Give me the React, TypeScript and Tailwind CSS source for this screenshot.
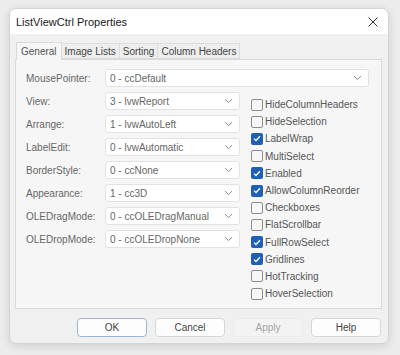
const font = { fontFamily: '"Liberation Sans", Arial, sans-serif' };

const combos = [
  { label: 'View:', value: '3 - lvwReport' },
  { label: 'Arrange:', value: '1 - lvwAutoLeft' },
  { label: 'LabelEdit:', value: '0 - lvwAutomatic' },
  { label: 'BorderStyle:', value: '0 - ccNone' },
  { label: 'Appearance:', value: '1 - cc3D' },
  { label: 'OLEDragMode:', value: '0 - ccOLEDragManual' },
  { label: 'OLEDropMode:', value: '0 - ccOLEDropNone' },
];

const checks: [string, boolean][] = [
  ['HideColumnHeaders', false],
  ['HideSelection', false],
  ['LabelWrap', true],
  ['MultiSelect', false],
  ['Enabled', true],
  ['AllowColumnReorder', true],
  ['Checkboxes', false],
  ['FlatScrollbar', false],
  ['FullRowSelect', true],
  ['Gridlines', true],
  ['HotTracking', false],
  ['HoverSelection', false],
];

function Chevron() {
  return (
    <svg width="9" height="6" viewBox="0 0 9 6" className="shrink-0">
      <path d="M1 1.2 L4.5 4.6 L8 1.2" fill="none" stroke="#8a8a8a" strokeWidth="1" />
    </svg>
  );
}

function Combo({ value, wide }: { value: string; wide?: boolean }) {
  return (
    <div
      className={`${wide ? 'w-[264px]' : 'w-[135px]'} h-[18px] bg-white border border-[#e2e2e2] rounded-[3px] flex items-center justify-between pl-[4px] pr-[6px]`}
    >
      <span className="text-[10px] text-[#666]">{value}</span>
      <Chevron />
    </div>
  );
}

function Check({ label, checked }: { label: string; checked: boolean }) {
  return (
    <div className="h-[17.2px] flex items-center">
      {checked ? (
        <div className="w-[12px] h-[12px] rounded-[2px] bg-[#1e5fb8] flex items-center justify-center">
          <svg width="8" height="7" viewBox="0 0 8 7">
            <path d="M1 3.6 L3 5.5 L7 1.3" fill="none" stroke="white" strokeWidth="1.3" />
          </svg>
        </div>
      ) : (
        <div className="w-[12px] h-[12px] rounded-[2px] border border-[#8c8c8c] bg-[#f7f7f7]" />
      )}
      <span className="ml-[2px] text-[10px] text-[#555]">{label}</span>
    </div>
  );
}

function Button({ label, primary, disabled }: { label: string; primary?: boolean; disabled?: boolean }) {
  return (
    <div
      className={`w-[70px] h-[19px] rounded-[4px] flex items-center justify-center text-[10px] border ${
        disabled
          ? 'bg-[#f3f3f3] border-[#ebebeb] text-[#a3a3a3]'
          : primary
          ? 'bg-[#fdfdfd] border-[#9db3d8] text-[#444]'
          : 'bg-[#fdfdfd] border-[#d6d6d6] text-[#444]'
      }`}
    >
      {label}
    </div>
  );
}

export default function App() {
  return (
    <div className="w-[400px] h-[355px] bg-[#ececec] pl-[9px] pt-[8px]" style={font}>
      <div className="w-[380px] h-[336px] rounded-[7px] border border-[#d4d4d4] bg-[#f0f0f0] overflow-hidden shadow-[0_2px_10px_rgba(0,0,0,0.12)] flex flex-col">
        {/* title bar */}
        <div className="h-[25px] bg-white flex items-center justify-between pl-[6px] pr-[10px] shrink-0">
          <span className="text-[11px] text-[#1a1a1a] mt-[1px]">ListViewCtrl Properties</span>
          <svg width="10" height="10" viewBox="0 0 10 10">
            <path d="M0.5 0.5 L9.5 9.5 M9.5 0.5 L0.5 9.5" stroke="#333" strokeWidth="1" />
          </svg>
        </div>

        {/* tabs */}
        <div className="pl-[6px] pt-[6px] flex items-end h-[25px] shrink-0">
          <div className="h-[18px] px-[4px] flex items-center border border-b-0 border-[#d9d9d9] bg-[#f6f6f6] text-[10px] text-[#555] relative top-[1px] z-10">
            General
          </div>
          <div className="h-[16px] px-[3px] flex items-center border border-l-0 border-[#dcdcdc] bg-[#eeeeee] text-[10px] text-[#444]">
            Image Lists
          </div>
          <div className="h-[16px] px-[3px] flex items-center border border-l-0 border-[#dcdcdc] bg-[#eeeeee] text-[10px] text-[#444]">
            Sorting
          </div>
          <div className="h-[16px] px-[3px] flex items-center border border-l-0 border-[#dcdcdc] bg-[#eeeeee] text-[10px] text-[#444]">
            Column Headers
          </div>
        </div>

        {/* panel */}
        <div className="ml-[5px] w-[367px] h-[250px] border border-[#d9d9d9] bg-[#f6f6f6] pl-[10px] pt-[9px] shrink-0">
          <div className="flex items-center h-[18px]">
            <span className="w-[79px] text-[10px] text-[#666]">MousePointer:</span>
            <Combo value="0 - ccDefault" wide />
          </div>
          <div className="flex mt-[5px]">
            <div className="flex flex-col gap-[5px]">
              {combos.map((c) => (
                <div key={c.label} className="flex items-center h-[18px]">
                  <span className="w-[79px] text-[10px] text-[#666]">{c.label}</span>
                  <Combo value={c.value} />
                </div>
              ))}
            </div>
            <div className="ml-[11px] mt-[4px] flex flex-col">
              {checks.map(([l, c]) => (
                <Check key={l} label={l} checked={c} />
              ))}
            </div>
          </div>
        </div>

        {/* buttons */}
        <div className="flex justify-end gap-[8px] pr-[7px] pt-[9px]">
          <Button label="OK" primary />
          <Button label="Cancel" />
          <Button label="Apply" disabled />
          <Button label="Help" />
        </div>
      </div>
    </div>
  );
}
